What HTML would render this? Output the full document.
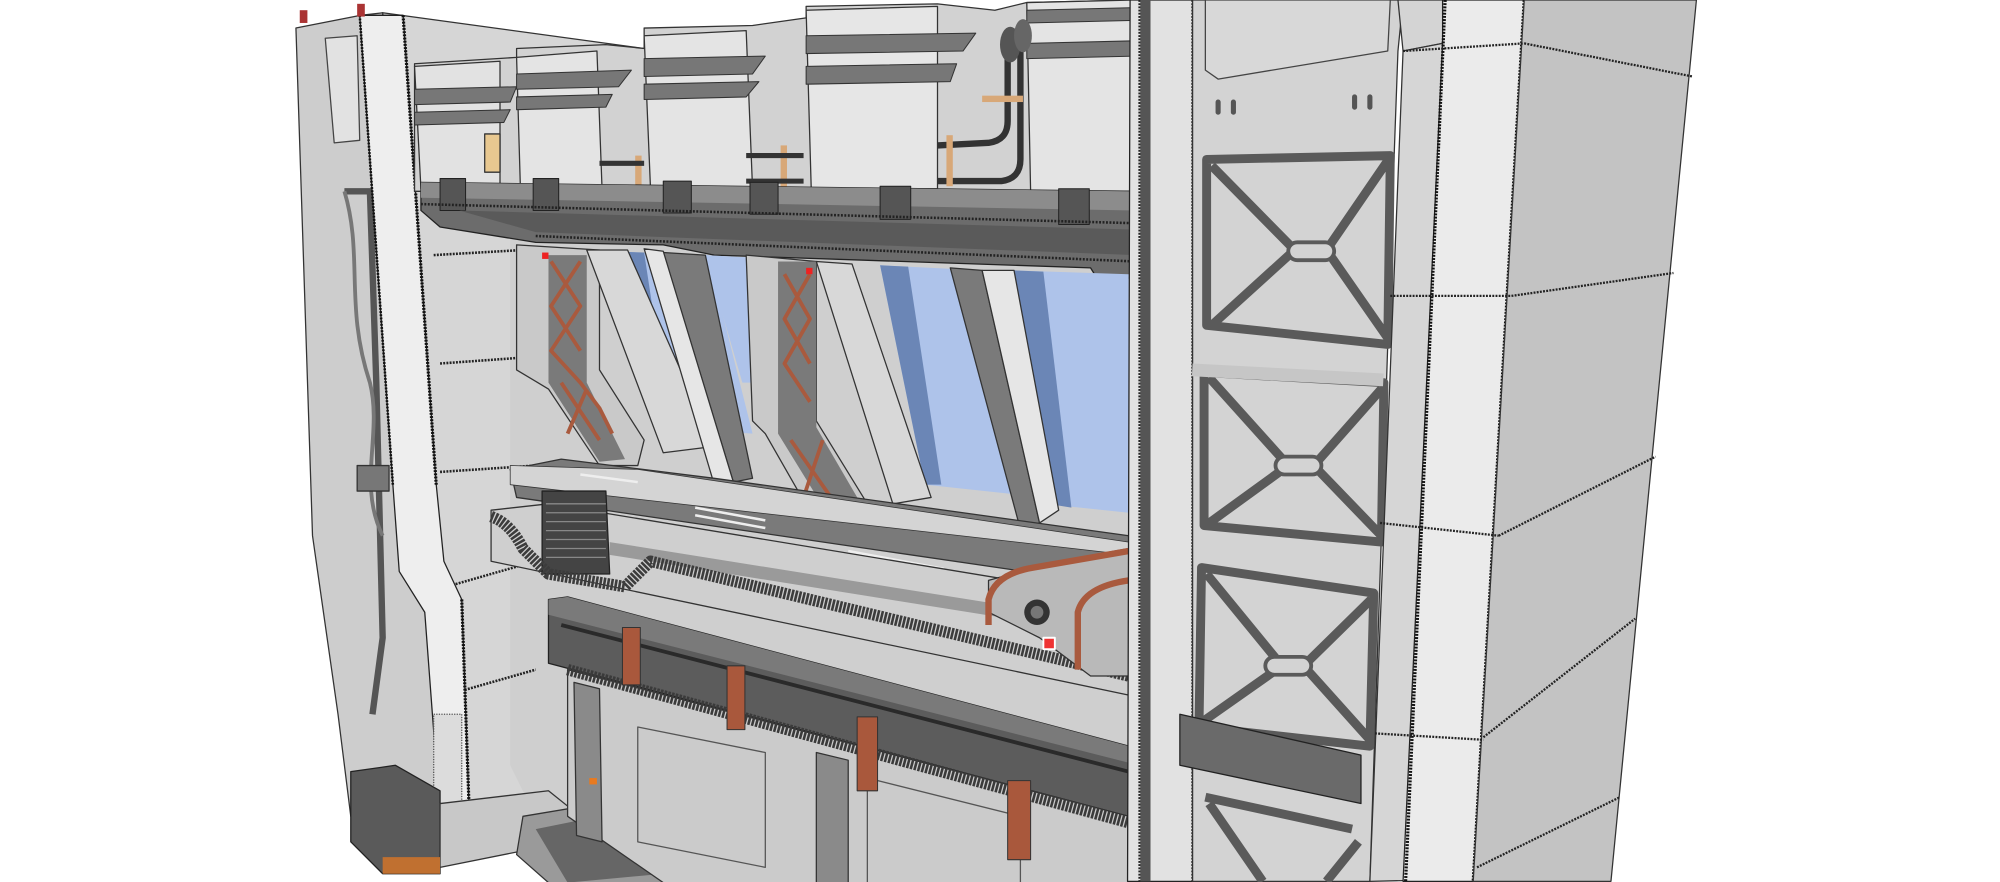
<!DOCTYPE html>
<html><head><meta charset="utf-8"><style>
html,body{margin:0;padding:0;background:#fff;}
svg{display:block}
</style></head><body>
<svg width="2000" height="882" viewBox="0 0 1568 691.5" xmlns="http://www.w3.org/2000/svg">
<rect width="1568" height="692" fill="#fff"/>
<g stroke-linejoin="round">
<polygon points="300,10 505,38 505,600 430,640 345,640 340,600" fill="#d6d6d6" stroke="#333" stroke-width="1"/>
<polygon points="400,185 885,200 885,691 445,691 400,600" fill="#cfcfcf"/>
<g stroke="#222" stroke-width="2" stroke-dasharray="1.5 1">
<line x1="340" y1="105" x2="420" y2="108"/><line x1="340" y1="200" x2="410" y2="196"/>
<line x1="345" y1="285" x2="415" y2="280"/><line x1="345" y1="370" x2="420" y2="365"/>
<line x1="350" y1="460" x2="420" y2="440"/><line x1="350" y1="545" x2="420" y2="525"/>
</g>
<polygon points="232,22 283,12 300,10 320,440 340,480 348,640 275,640 265,560 245,420" fill="#cdcdcd" stroke="#333" stroke-width="1"/>
<polygon points="255,30 280,28 282,110 262,112" fill="#e2e2e2" stroke="#444" stroke-width="1"/>
<path d="M270,150 L290,150 L295,300 L300,500 L292,560" fill="none" stroke="#555" stroke-width="5"/>
<path d="M270,150 C285,200 270,240 290,300 C300,340 280,380 300,420" fill="none" stroke="#777" stroke-width="3"/>
<rect x="280" y="365" width="25" height="20" fill="#777" stroke="#333"/>
<polygon points="282,12 316,12 342,380 348,440 362,470 368,640 345,640 333,480 313,448 308,380" fill="#eeeeee" stroke="#222" stroke-width="1"/>
<line x1="316" y1="12" x2="342" y2="380" stroke="#111" stroke-width="2.5" stroke-dasharray="1.5 1"/>
<line x1="282" y1="12" x2="308" y2="380" stroke="#111" stroke-width="2" stroke-dasharray="1.5 1"/>
<line x1="362" y1="470" x2="368" y2="640" stroke="#111" stroke-width="2.5" stroke-dasharray="1.5 1"/>
<rect x="340" y="560" width="22" height="70" fill="#dcdcdc" stroke="#555" stroke-dasharray="1 1"/>
<rect x="235" y="8" width="6" height="10" fill="#a33"/><rect x="280" y="3" width="6" height="10" fill="#a33"/>
<polygon points="275,605 310,600 345,620 345,685 300,685 275,660" fill="#5a5a5a" stroke="#222"/>
<polygon points="345,630 430,620 455,640 420,665 345,680" fill="#c8c8c8" stroke="#333"/>
<polygon points="300,672 345,672 345,685 300,685" fill="#c07030"/>
<polygon points="410,640 470,630 520,680 520,692 430,692 405,670" fill="#9a9a9a" stroke="#333"/>
<polygon points="420,650 470,640 520,685 445,692" fill="#666"/>

<polygon points="325,50 405,45 405,38 475,35 505,38 505,22 590,20 632,14 632,5 735,3 780,8 805,2 890,0 890,150 325,150" fill="#d2d2d2" stroke="#333" stroke-width="1"/>
<polygon points="325,52 392,48 392,148 330,148" fill="#e2e2e2" stroke="#333"/>
<polygon points="405,45 468,40 472,148 408,148" fill="#e4e4e4" stroke="#333"/>
<polygon points="505,28 585,24 590,148 510,148" fill="#e4e4e4" stroke="#333"/>
<polygon points="632,8 735,5 735,148 636,148" fill="#e6e6e6" stroke="#333"/>
<polygon points="805,2 890,0 890,150 808,150" fill="#e4e4e4" stroke="#333"/>
<g fill="#777" stroke="#333" stroke-width="0.8">
<polygon points="325,70 405,68 400,80 325,82"/><polygon points="325,88 400,86 395,96 325,98"/>
<polygon points="405,58 495,55 485,68 405,70"/><polygon points="405,76 480,74 475,84 405,86"/>
<polygon points="505,46 600,44 590,58 505,60"/><polygon points="505,66 595,64 585,76 505,78"/>
<polygon points="632,28 765,26 755,40 632,42"/><polygon points="632,52 750,50 745,64 632,66"/>
<polygon points="805,8 890,6 890,16 805,18"/><polygon points="805,34 890,32 890,44 805,46"/>
</g>
<path d="M790,30 L790,95 Q790,110 775,112 L735,114" fill="none" stroke="#333" stroke-width="5"/>
<path d="M800,30 L800,125 Q800,140 785,142 L735,142" fill="none" stroke="#333" stroke-width="5"/>
<ellipse cx="792" cy="35" rx="8" ry="14" fill="#555"/><ellipse cx="802" cy="28" rx="7" ry="13" fill="#666"/>
<rect x="770" y="75" width="32" height="5" fill="#d8a878"/>
<rect x="742" y="106" width="5" height="40" fill="#d8a878"/>
<rect x="612" y="114" width="5" height="34" fill="#d8a878"/>
<rect x="498" y="122" width="5" height="30" fill="#d8a878"/>
<rect x="380" y="105" width="12" height="30" fill="#e8c890" stroke="#333"/>
<line x1="585" y1="122" x2="630" y2="122" stroke="#333" stroke-width="4"/>
<line x1="585" y1="142" x2="630" y2="142" stroke="#333" stroke-width="4"/>
<line x1="470" y1="128" x2="505" y2="128" stroke="#333" stroke-width="4"/>

<polygon points="330,143 890,150 890,218 860,218 855,210 560,200 520,192 420,190 345,178 330,165" fill="#6c6c6c" stroke="#222" stroke-width="1"/>
<polygon points="330,143 890,150 890,165 330,155" fill="#8c8c8c"/>
<g fill="#555" stroke="#222" stroke-width="0.8">
<rect x="345" y="140" width="20" height="25"/><rect x="418" y="140" width="20" height="25"/>
<rect x="520" y="142" width="22" height="25"/><rect x="588" y="143" width="22" height="25"/>
<rect x="690" y="146" width="24" height="26"/><rect x="830" y="148" width="24" height="28"/>
</g>
<polygon points="360,165 890,180 890,200 420,182" fill="#5a5a5a"/>
<line x1="330" y1="160" x2="890" y2="175" stroke="#222" stroke-width="2" stroke-dasharray="1.5 1.2"/>
<line x1="420" y1="185" x2="890" y2="205" stroke="#222" stroke-width="2" stroke-dasharray="1.5 1.2"/>

<polygon points="478,197 555,200 590,340 520,335" fill="#aec3ea"/>
<polygon points="478,197 505,198 525,330 515,335" fill="#6b86b6"/>
<polygon points="553,200 590,202 600,300 582,300" fill="#aec3ea"/>
<polygon points="690,208 770,212 800,388 725,380" fill="#aec3ea"/>
<polygon points="690,208 712,209 738,380 725,380" fill="#6b86b6"/>
<polygon points="795,212 885,215 885,402 828,396" fill="#aec3ea"/>
<polygon points="795,212 818,213 840,398 828,396" fill="#6b86b6"/>
<polygon points="405,192 470,196 470,290 505,345 500,365 470,365 430,305 405,290" fill="#c9c9c9" stroke="#333"/>
<polygon points="430,200 460,200 460,300 490,360 470,362 430,300" fill="#7a7a7a"/>
<path d="M432,205 L455,240 L432,275 L455,300 L470,320 L480,340 M455,205 L432,240 L455,275 M440,300 L470,345 M460,305 L445,340" fill="none" stroke="#a95a3e" stroke-width="3"/>
<polygon points="460,196 492,196 560,350 520,355" fill="#d8d8d8" stroke="#333"/>
<polygon points="520,198 553,200 590,375 575,378" fill="#7a7a7a" stroke="#333"/>
<polygon points="505,195 520,197 575,378 560,380" fill="#e6e6e6" stroke="#333"/>
<polygon points="585,200 640,205 640,330 680,395 665,410 640,410 600,340 590,330" fill="#c9c9c9" stroke="#333"/>
<polygon points="610,205 640,205 640,335 675,395 650,405 610,340" fill="#7a7a7a"/>
<path d="M615,215 L635,250 L615,285 L635,315 M635,215 L615,250 L635,285 M620,345 L655,395 M645,345 L630,390" fill="none" stroke="#a95a3e" stroke-width="3"/>
<polygon points="640,205 668,207 730,390 700,395" fill="#d8d8d8" stroke="#333"/>
<polygon points="745,210 770,212 815,410 800,415" fill="#7a7a7a" stroke="#333"/>
<polygon points="770,212 795,212 830,400 815,410" fill="#e6e6e6" stroke="#333"/>
<rect x="425" y="198" width="5" height="5" fill="#e22"/><rect x="632" y="210" width="5" height="5" fill="#e22"/>

<polygon points="400,368 440,360 560,375 885,420 885,460 440,395 405,390" fill="#7a7a7a" stroke="#333"/>
<polygon points="400,365 500,368 885,425 885,435 400,380" fill="#d4d4d4" stroke="#333" stroke-width="0.6"/>
<g stroke="#eee" stroke-width="2"><line x1="545" y1="398" x2="600" y2="408"/><line x1="545" y1="404" x2="600" y2="414"/>
<line x1="665" y1="432" x2="740" y2="446"/><line x1="665" y1="438" x2="740" y2="452"/><line x1="455" y1="372" x2="500" y2="378"/></g>
<polygon points="385,400 430,395 885,470 885,545 385,440" fill="#cfcfcf" stroke="#333"/>
<polygon points="478,425 885,490 885,500 478,435" fill="#9a9a9a"/>
<polygon points="425,385 475,385 478,450 425,450" fill="#444" stroke="#222"/>
<g stroke="#888" stroke-width="1"><line x1="428" y1="395" x2="475" y2="395"/><line x1="428" y1="402" x2="475" y2="402"/><line x1="428" y1="409" x2="475" y2="409"/><line x1="428" y1="416" x2="475" y2="416"/><line x1="428" y1="423" x2="475" y2="423"/><line x1="428" y1="430" x2="475" y2="430"/><line x1="428" y1="437" x2="475" y2="437"/></g>
<path d="M385,405 Q400,410 410,430 L430,450 L490,460 L510,440 L885,530" fill="none" stroke="#3c3c3c" stroke-width="9" stroke-dasharray="2 1"/>
<polygon points="775,455 830,440 885,430 885,530 855,530 815,500 775,480" fill="#b9b9b9" stroke="#333"/>
<path d="M775,490 L775,470 Q780,450 810,445 L885,432 M845,525 L845,480 Q850,460 885,455" fill="none" stroke="#a95a3e" stroke-width="5"/>
<circle cx="813" cy="480" r="10" fill="#333"/><circle cx="813" cy="480" r="5" fill="#777"/>
<rect x="818" y="500" width="9" height="9" fill="#e33" stroke="#fff" stroke-width="1.5"/>

<polygon points="430,470 445,468 885,585 885,640 430,520" fill="#5c5c5c" stroke="#222"/>
<polygon points="430,470 445,468 885,585 885,598 430,482" fill="#7a7a7a"/>
<path d="M440,490 L885,605" stroke="#2a2a2a" stroke-width="3"/>
<polygon points="445,525 885,640 885,692 520,692 445,640" fill="#cbcbcb" stroke="#333"/>
<path d="M445,525 L885,645" stroke="#3a3a3a" stroke-width="9" stroke-dasharray="2 1"/>
<polygon points="450,535 470,540 472,660 452,655" fill="#8a8a8a" stroke="#333"/>
<polygon points="640,590 665,596 665,692 640,692" fill="#8a8a8a" stroke="#333"/>
<rect x="462" y="610" width="6" height="5" fill="#e87a20"/>
<g fill="none" stroke="#555" stroke-width="1">
<path d="M500,570 L600,590 L600,680 L500,660 Z"/><path d="M680,610 L800,640 L800,692 L680,692 Z"/>
</g>
<g fill="#a9583c" stroke="#333" stroke-width="0.8">
<rect x="488" y="492" width="14" height="45"/><rect x="570" y="522" width="14" height="50"/>
<rect x="672" y="562" width="16" height="58"/><rect x="790" y="612" width="18" height="62"/>
</g>
<polygon points="886,0 935,0 935,691 884,691" fill="#e2e2e2" stroke="#222"/>
<line x1="894" y1="0" x2="894" y2="691" stroke="#222" stroke-width="3" stroke-dasharray="1.5 1"/>
<line x1="935" y1="0" x2="935" y2="691" stroke="#222" stroke-width="2" stroke-dasharray="1.5 1"/>
<polygon points="894,0 902,0 902,691 894,691" fill="#555"/>
<polygon points="935,0 1100,0 1096,40 1092,150 1074,691 935,691" fill="#d3d3d3" stroke="#333"/>
<polygon points="945,0 1090,0 1088,40 955,62 945,55" fill="#d8d8d8" stroke="#444"/>
<g fill="#555"><rect x="953" y="78" width="4" height="12" rx="2"/><rect x="965" y="78" width="4" height="12" rx="2"/><rect x="1060" y="74" width="4" height="12" rx="2"/><rect x="1072" y="74" width="4" height="12" rx="2"/></g>
<g fill="none" stroke="#5a5a5a" stroke-width="7" stroke-linejoin="round">
<path d="M946,125 L1090,122 L1088,270 L946,255 Z M950,130 L1015,196 L950,255 M1088,126 L1040,196 L1088,265"/>
<path d="M944,292 L1085,300 L1083,425 L944,412 Z M948,296 L1010,365 L948,410 M1083,305 L1030,365 L1083,420"/>
<path d="M942,445 L1077,465 L1074,585 L940,570 Z M946,450 L1005,522 L944,565 M1075,470 L1022,522 L1074,580"/>
<path d="M945,625 L1060,650 M948,630 L990,691 M1065,660 L1040,691"/>
</g>
<g fill="#d3d3d3" stroke="#5a5a5a" stroke-width="3">
<rect x="1010" y="190" width="36" height="14" rx="7"/><rect x="1000" y="358" width="36" height="14" rx="7"/><rect x="992" y="515" width="36" height="14" rx="7"/>
</g>
<polygon points="925,560 1067,592 1067,630 925,600" fill="#6a6a6a" stroke="#222"/>
<rect x="935" y="285" width="150" height="10" fill="#c6c6c6" transform="rotate(3 935 285)"/>
<polygon points="1096,0 1140,0 1131,34 1100,40" fill="#d4d4d4" stroke="#333"/>
<polygon points="1100,40 1131,34 1115,690 1074,691" fill="#d6d6d6" stroke="#333"/>
<polygon points="1131,0 1195,0 1195,34 1155,691 1100,691 1131,34" fill="#ebebeb" stroke="#222"/>
<g stroke="#111" stroke-width="2.5" stroke-dasharray="1.5 1"><line x1="1133" y1="0" x2="1102" y2="691"/><line x1="1195" y1="0" x2="1155" y2="691"/></g>
<polygon points="1195,0 1330,0 1263,691 1155,691" fill="#c3c3c3" stroke="#333"/>
<g stroke="#222" stroke-width="1.8" stroke-dasharray="1.5 1">
<line x1="1195" y1="34" x2="1327" y2="60"/><line x1="1185" y1="232" x2="1312" y2="214"/>
<line x1="1175" y1="420" x2="1298" y2="358"/><line x1="1163" y1="578" x2="1282" y2="485"/><line x1="1158" y1="680" x2="1270" y2="625"/>
<line x1="1100" y1="40" x2="1195" y2="34"/><line x1="1090" y1="232" x2="1185" y2="232"/>
<line x1="1082" y1="410" x2="1175" y2="420"/><line x1="1078" y1="575" x2="1163" y2="580"/>
</g>
</g>
</svg>
</body></html>
